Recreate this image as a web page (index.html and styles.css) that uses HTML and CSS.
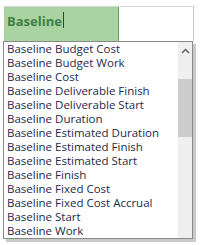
FILE: index.html
```html
<!DOCTYPE html>
<html>
<head>
<meta charset="utf-8">
<link rel="stylesheet" href="styles.css">
</head>
<body>
<div class="sheet">
  <div class="cells">
    <div class="cell-edit"><span class="edit-text">Baseline</span><span class="caret"></span></div>
    <div class="cell-blank"></div>
  </div>
  <div class="dropdown">
    <ul class="items">
      <li>Baseline Budget Cost</li>
      <li>Baseline Budget Work</li>
      <li>Baseline Cost</li>
      <li>Baseline Deliverable Finish</li>
      <li>Baseline Deliverable Start</li>
      <li>Baseline Duration</li>
      <li>Baseline Estimated Duration</li>
      <li>Baseline Estimated Finish</li>
      <li>Baseline Estimated Start</li>
      <li>Baseline Finish</li>
      <li>Baseline Fixed Cost</li>
      <li>Baseline Fixed Cost Accrual</li>
      <li>Baseline Start</li>
      <li>Baseline Work</li>
    </ul>
    <div class="scrollbar">
      <div class="arrow-up"><svg width="9" height="6" viewBox="0 0 9 6"><path d="M1 5 L4.5 1.5 L8 5" fill="none" stroke="#606060" stroke-width="1.5"/></svg></div>
      <div class="track-top"></div>
      <div class="thumb"></div>
      <div class="track-rest"></div>
    </div>
  </div>
</div>
</body>
</html>
```
FILE: styles.css
```css
html, body {
  margin: 0;
  padding: 0;
  background: #ffffff;
  width: 200px;
  height: 245px;
  overflow: hidden;
}
.sheet {
  padding-top: 6px;
  width: 194px;
}
.cells {
  display: flex;
  border-top: 1px solid #d6d6d6;
  border-right: 1px solid #c6c6c6;
  height: 34px;
  margin-left: 4px;
}
.cell-edit {
  width: 115px;
  background: #a9d4a2;
  border-right: 1px solid #6f9f6a;
  display: flex;
  align-items: flex-start;
  padding-top: 5px;
  box-sizing: border-box;
}
.edit-text {
  font-family: "Open Sans", "DejaVu Sans", sans-serif;
  font-weight: 700;
  font-size: 13px;
  line-height: 18px;
  color: #3f7f42;
  margin-left: 3px;
}
.caret {
  width: 1px;
  height: 16px;
  background: #4a2d5e;
  margin-left: 1px;
  margin-top: 0px;
}
.cell-blank {
  flex: 1;
  background: #ffffff;
}
.dropdown {
  display: flex;
  margin-left: 3px;
  width: 188px;
  border: 1px solid #8a8a8a;
  background: #ffffff;
  box-shadow: 3px 3px 0 #c9c9c9;
}
.items {
  list-style: none;
  margin: 0;
  padding: 0 0 0 3px;
  flex: 1;
}
.items li {
  font-family: "Open Sans", "DejaVu Sans", sans-serif;
  font-size: 11.5px;
  line-height: 14px;
  height: 14px;
  color: #1e2b4d;
  white-space: nowrap;
  overflow: hidden;
}
.scrollbar {
  width: 14px;
  display: flex;
  flex-direction: column;
  background: #efefef;
}
.arrow-up {
  height: 17px;
  display: flex;
  align-items: center;
  justify-content: center;
}
.track-top {
  height: 20px;
}
.thumb {
  height: 58px;
  background: #cdcdcd;
  margin: 0 0;
}
.track-rest {
  flex: 1;
}
```
